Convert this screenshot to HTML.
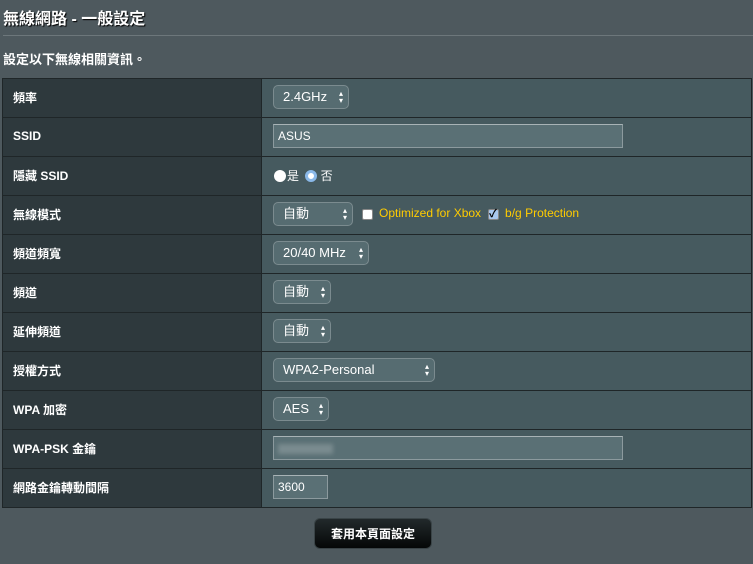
<!DOCTYPE html><html><head><meta charset="utf-8"><style>
*{margin:0;padding:0;box-sizing:border-box}
body{width:753px;height:564px;background:#4e595e;font-family:"Liberation Sans","Noto Sans CJK TC",sans-serif;color:#fff;position:relative;overflow:hidden}
.a{position:absolute}
.t{left:3px;top:5px;font-size:16px;font-weight:bold;text-shadow:1px 1px 1px #000}
.hr{left:3px;top:35px;width:750px;height:1px;background:#2b3336;border-bottom:1px solid #6d777b}
.d{left:3px;top:49px;font-size:13px;font-weight:bold}
table{position:absolute;left:2px;top:78px;width:750px;border-collapse:collapse}
td{height:39px;border:1px solid #1f2628;font-size:12px;font-weight:bold;padding-bottom:2px}
td.l{width:259px;background:#2e393d;padding-left:10px}
td.v{background:#465a5f;padding-left:11px}
.s{display:inline-block;height:24px;border:1px solid #7b8b8f;border-radius:5px;background:#566c71;font-size:13px;font-weight:normal;line-height:22px;padding-left:9px;position:relative;vertical-align:middle}
.s:after{content:"\25B4\A\25BE";white-space:pre;position:absolute;right:5px;top:4px;font-size:8px;line-height:7px}
.i{display:inline-block;height:24px;border:1px solid #8c9a9e;border-top-color:#a8b3b6;background:#5a7075;font-size:12px;font-weight:normal;line-height:22px;padding-left:4px;vertical-align:middle}
.y{color:#ffcc00;font-weight:normal}
.btn{left:314px;top:518px;width:118px;height:31px;border-radius:6px;background:linear-gradient(#22292b,#050707);border:1px solid #3a4447;text-align:center;line-height:30px;font-size:12px;font-weight:bold}
.cb{display:inline-block;width:11px;height:11px;background:#fff;border:1px solid #888;border-radius:2px;vertical-align:middle}
</style></head><body>
<div class="a t">無線網路 - 一般設定</div>
<div class="a hr"></div>
<div class="a d">設定以下無線相關資訊。</div>
<table>
<tr><td class="l">頻率</td><td class="v"><span class="s" style="width:76px">2.4GHz</span></td></tr>
<tr><td class="l">SSID</td><td class="v"><span class="i" style="width:350px">ASUS</span></td></tr>
<tr><td class="l">隱藏 SSID</td><td class="v" style="font-weight:normal"><span style="display:inline-block;width:12px;height:12px;border-radius:50%;background:#fff;vertical-align:middle;margin:0 1px 0 1px"></span>是 <span style="display:inline-block;width:12px;height:12px;border-radius:50%;background:#fff;border:3px solid #8ab8e8;vertical-align:middle;margin-left:3px"></span> 否</td></tr>
<tr><td class="l">無線模式</td><td class="v"><span class="s" style="width:80px">自動</span><span class="cb" style="margin:0 6px 0 9px"></span><span class="y">Optimized for Xbox</span><span class="cb" style="background:#a9c8ee;color:#000;font-size:11px;line-height:8px;margin:0 6px 0 7px">✓</span><span class="y">b/g Protection</span></td></tr>
<tr><td class="l">頻道頻寬</td><td class="v"><span class="s" style="width:96px">20/40 MHz</span></td></tr>
<tr><td class="l">頻道</td><td class="v"><span class="s" style="width:58px">自動</span></td></tr>
<tr><td class="l">延伸頻道</td><td class="v"><span class="s" style="width:58px">自動</span></td></tr>
<tr><td class="l">授權方式</td><td class="v"><span class="s" style="width:162px">WPA2-Personal</span></td></tr>
<tr><td class="l">WPA 加密</td><td class="v"><span class="s" style="width:56px">AES</span></td></tr>
<tr><td class="l">WPA-PSK 金鑰</td><td class="v"><span class="i" style="width:350px"><span style="display:inline-block;width:55px;height:10px;background:#7a8b8f;filter:blur(2px);vertical-align:middle"></span></span></td></tr>
<tr><td class="l">網路金鑰轉動間隔</td><td class="v"><span class="i" style="width:55px">3600</span></td></tr>
</table>
<div class="a btn">套用本頁面設定</div>
</body></html>
